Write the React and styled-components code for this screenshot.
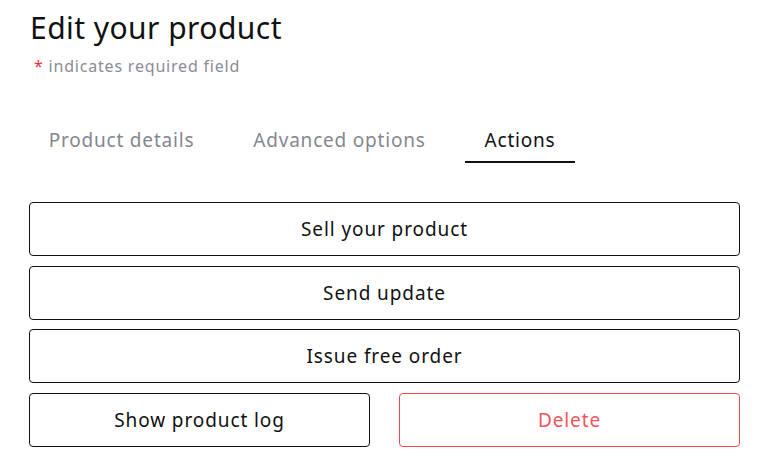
import styled, { createGlobalStyle } from 'styled-components'

const Global = createGlobalStyle`
  body {
    margin: 0;
    background: #ffffff;
    font-family: "Noto Sans", "DejaVu Sans", sans-serif;
    color: #111111;
  }
`

const Page = styled.main`
  padding: 9px 38px 0 29px;
  display: flex;
  flex-direction: column;
`

const Title = styled.h1`
  margin: 0 0 0 1px;
  font-size: 30px;
  font-weight: 400;
  letter-spacing: 0.45px;
  line-height: 38px;
  color: #111;
`

const Hint = styled.p`
  margin: 9px 0 0 5px;
  font-size: 16px;
  letter-spacing: 0.8px;
  color: #8a8c96;
  line-height: 20px;
`

const Star = styled.span`
  color: #e8323c;
`

const Tabs = styled.nav`
  display: flex;
  gap: 19px;
  margin-top: 41px;
`

const Tab = styled.button`
  width: ${p => p.$w}px;
  height: 46px;
  padding: 2px 0 0;
  background: none;
  border: none;
  border-bottom: 2px solid ${p => (p.$active ? '#111' : 'transparent')};
  font-family: inherit;
  font-size: 19px;
  letter-spacing: 0.8px;
  color: ${p => (p.$active ? '#111' : '#85878f')};
  cursor: pointer;
`

const Actions = styled.section`
  display: grid;
  grid-template-columns: 1fr 1fr;
  column-gap: 29px;
  row-gap: 9.67px;
  margin-top: 39px;
`

const Action = styled.button`
  grid-column: ${p => (p.$full ? '1 / -1' : 'auto')};
  height: 54px;
  background: #fff;
  border: 1px solid ${p => (p.$danger ? '#f0474f' : '#111')};
  border-radius: 4px;
  font-family: inherit;
  font-size: 19px;
  letter-spacing: 0.9px;
  color: ${p => (p.$danger ? '#f0555d' : '#111')};
  cursor: pointer;
`

export default function App() {
  return (
    <Page>
      <Global />
      <Title>Edit your product</Title>
      <Hint><Star>*</Star> indicates required field</Hint>
      <Tabs>
        <Tab $w={185}>Product details</Tab>
        <Tab $w={213}>Advanced options</Tab>
        <Tab $w={110} $active>Actions</Tab>
      </Tabs>
      <Actions>
        <Action $full>Sell your product</Action>
        <Action $full>Send update</Action>
        <Action $full>Issue free order</Action>
        <Action>Show product log</Action>
        <Action $danger>Delete</Action>
      </Actions>
    </Page>
  )
}
